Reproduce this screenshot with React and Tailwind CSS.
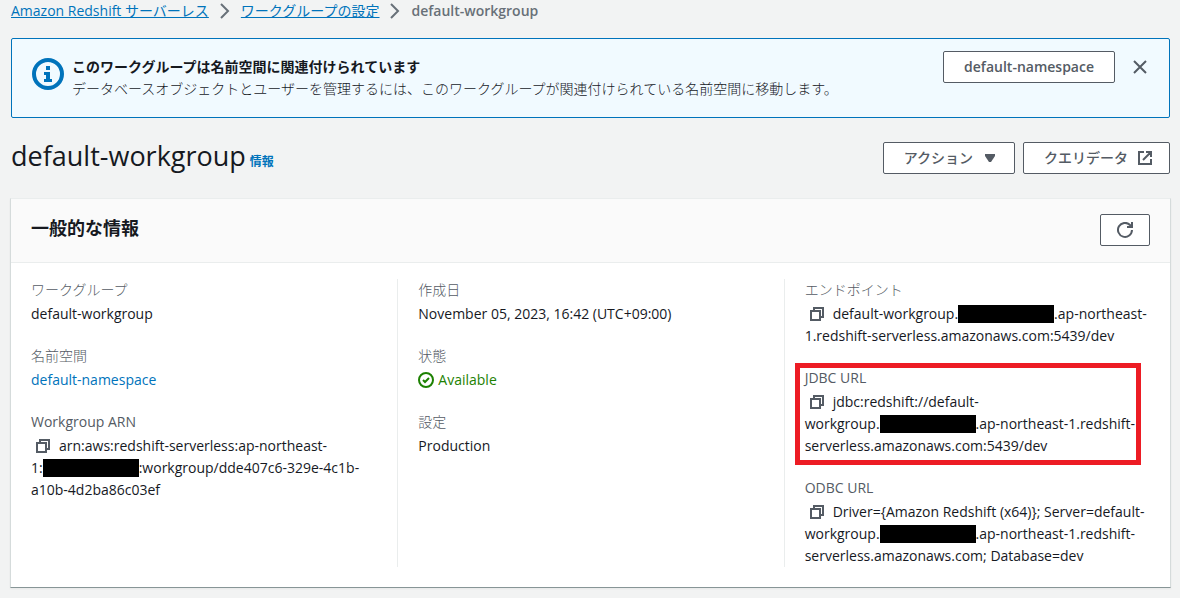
import React from 'react';
import clsx from 'clsx';

const ChevronIcon = () => (
    <svg viewBox="0 0 16 16" className="w-4 h-4 shrink-0 fill-none stroke-[#687078] stroke-2" aria-hidden="true">
        <path d="M4 1l7 7-7 7" />
    </svg>
);

const InfoIcon = () => (
    <svg viewBox="0 0 32 32" className="w-8 h-8 shrink-0" aria-hidden="true">
        <circle cx="16" cy="16" r="14" className="fill-none stroke-[#0073bb]" strokeWidth="4" />
        <path d="M14 8h4v4h-4zM12 14h6v7h2v3h-8v-3h2v-4h-2z" className="fill-[#0073bb]" />
    </svg>
);

const CloseIcon = () => (
    <svg viewBox="0 0 16 16" className="w-4 h-4 fill-none stroke-[#545b64] stroke-2" aria-hidden="true">
        <path d="M2 2l12 12M14 2L2 14" />
    </svg>
);

const CaretIcon = () => (
    <svg viewBox="0 0 16 16" className="w-4 h-4 fill-[#545b64]" aria-hidden="true">
        <path d="M3 4h10v2l-4 6H7L3 6z" />
    </svg>
);

const ExternalIcon = () => (
    <svg viewBox="0 0 16 16" className="w-4 h-4 fill-none stroke-[#545b64] stroke-2" aria-hidden="true">
        <path d="M7 2H2v12h12V9M9 2h5v5M6 10l8-8" />
    </svg>
);

const RefreshIcon = () => (
    <svg viewBox="0 0 16 16" className="w-4 h-4 fill-none stroke-[#545b64] stroke-2" aria-hidden="true">
        <path d="M15 8a7 7 0 1 1-2-5l2 2M15 0v5h-5" />
    </svg>
);

const CopyIcon = () => (
    <svg viewBox="0 0 16 16" className="w-4 h-4 fill-none stroke-[#545b64] stroke-2" aria-hidden="true">
        <path d="M2 5h9v9H2zM5 5V2h9v9h-3" />
    </svg>
);

const CheckIcon = () => (
    <svg viewBox="0 0 16 16" className="w-4 h-4 fill-none stroke-[#1d8102] stroke-2" aria-hidden="true">
        <circle cx="8" cy="8" r="7" />
        <path d="M5 8l2 2 4-4" />
    </svg>
);

const Button = ({ className, children, ...props }) => (
    <button
        type="button"
        className={clsx('h-8 flex items-center justify-center gap-[9px] border border-[#545b64] rounded-xs bg-white text-sm text-[#545b64] hover:bg-[#fafafa]', className)}
        {...props}
    >
        {children}
    </button>
);

const CopyButton = ({ label }) => (
    <button type="button" aria-label={label} className="inline-block align-[-3px] w-4 h-4 ml-1 mr-2">
        <CopyIcon />
    </button>
);

const Masked = () => <span className="inline-block align-[-4px] w-24 h-[18px] bg-black" />;

const Field = ({ label, latin, marked, children }) => (
    <div className="relative">
        <dt className={clsx('text-sm leading-[22px] text-[#545b64]', latin ? 'font-normal' : 'font-light')}>{label}</dt>
        <dd className="mt-0.5 text-sm leading-[22px] text-[#16191f]">{children}</dd>
        {marked && <div className="absolute -left-2.5 right-[9px] -top-1 -bottom-2 border-5 border-[#ed1c24] pointer-events-none" />}
    </div>
);

const App = () => {
    return (
        <div className="min-h-screen bg-[#f2f3f3] pl-2.5 pr-[9px] pb-2.5 font-['Open_Sans','Noto_Sans_CJK_JP',sans-serif] text-[#16191f]">
            {/* Breadcrumbs */}
            <nav aria-label="Breadcrumb" className="flex items-center gap-2 text-sm leading-[22px] pl-px">
                <a href="#serverless" className="text-[#0073bb] underline">Amazon Redshift サーバーレス</a>
                <ChevronIcon />
                <a href="#workgroups" className="text-[#0073bb] underline">ワークグループの設定</a>
                <ChevronIcon />
                <span className="font-semibold text-[#687078]">default-workgroup</span>
            </nav>

            {/* Namespace notice */}
            <div className="mt-4 mx-px h-20 flex items-start border border-[#0073bb] rounded-xs bg-[#f1faff] pl-5 pr-[21px] py-3">
                <div className="mt-[7px]"><InfoIcon /></div>
                <div className="flex-1 ml-2 mt-[5px] text-sm leading-[22px]">
                    <p className="font-bold">このワークグループは名前空間に関連付けられています</p>
                    <p className="font-light">データベースオブジェクトとユーザーを管理するには、このワークグループが関連付けられている名前空間に移動します。</p>
                </div>
                <Button className="px-5 font-semibold">default-namespace</Button>
                <button type="button" aria-label="閉じる" className="ml-[17px] h-8 flex items-center">
                    <CloseIcon />
                </button>
            </div>

            {/* Page title */}
            <div className="mt-6 mx-px flex items-start justify-between">
                <div className="flex items-baseline gap-1">
                    <h1 className="text-[27px] leading-7">default-workgroup</h1>
                    <a href="#info" className="text-xs font-bold text-[#0073bb]">情報</a>
                </div>
                <div className="flex gap-2">
                    <Button className="pl-5 pr-4 font-medium">アクション <CaretIcon /></Button>
                    <Button className="pl-5 pr-4 font-medium">クエリデータ <ExternalIcon /></Button>
                </div>
            </div>

            {/* General information */}
            <section className="mt-6 border-x border-t border-t-[#eaeded] border-x-[#d5dbdb] border-b border-b-[#879596] bg-white shadow-xs">
                <div className="flex items-start justify-between h-16 pt-[15px] px-5 bg-[#fafafa] border-b border-[#eaeded]">
                    <h2 className="text-lg leading-7 font-bold">一般的な情報</h2>
                    <Button className="px-4" aria-label="更新"><RefreshIcon /></Button>
                </div>
                <div className="grid grid-cols-3 pt-4 pb-5">
                    <dl className="flex flex-col gap-5 px-5">
                        <Field label="ワークグループ">default-workgroup</Field>
                        <Field label="名前空間">
                            <a href="#namespace" className="text-[#0073bb]">default-namespace</a>
                        </Field>
                        <Field label="Workgroup ARN" latin>
                            <CopyButton label="ARN をコピー" />arn:aws:redshift-serverless:ap-northeast-<br />
                            1:<Masked />:workgroup/dde407c6-329e-4c1b-<br />
                            a10b-4d2ba86c03ef
                        </Field>
                    </dl>
                    <dl className="flex flex-col gap-5 px-5 border-l border-[#eaeded]">
                        <Field label="作成日">November 05, 2023, 16:42 (UTC+09:00)</Field>
                        <Field label="状態">
                            <span className="flex items-center gap-1 text-[#1d8102]"><CheckIcon /> Available</span>
                        </Field>
                        <Field label="設定">Production</Field>
                    </dl>
                    <dl className="flex flex-col gap-5 px-5 border-l border-[#eaeded] whitespace-nowrap">
                        <Field label="エンドポイント">
                            <CopyButton label="エンドポイントをコピー" />default-workgroup.<Masked />.ap-northeast-<br />
                            1.redshift-serverless.amazonaws.com:5439/dev
                        </Field>
                        <Field label="JDBC URL" latin marked>
                            <CopyButton label="JDBC URL をコピー" />jdbc:redshift://default-<br />
                            workgroup.<Masked />.ap-northeast-1.redshift-<br />
                            serverless.amazonaws.com:5439/dev
                        </Field>
                        <Field label="ODBC URL" latin>
                            <CopyButton label="ODBC URL をコピー" />Driver={'{'}Amazon Redshift (x64){'}'}; Server=default-<br />
                            workgroup.<Masked />.ap-northeast-1.redshift-<br />
                            serverless.amazonaws.com; Database=dev
                        </Field>
                    </dl>
                </div>
            </section>
        </div>
    );
};

export default App;
